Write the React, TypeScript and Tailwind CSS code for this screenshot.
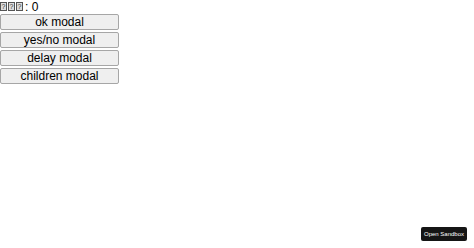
const Tofu = () => (
  <span className="inline-flex h-[9px] w-[7px] items-center justify-center border border-[#555] bg-[#ddd] text-[7px] leading-none text-[#333] mr-[1px]">
    ?
  </span>
);

const buttons = ["ok modal", "yes/no modal", "delay modal", "children modal"];

export default function App() {
  return (
    <div className="min-h-screen bg-white font-['Liberation_Sans',Arial,sans-serif] text-black">
      <div className="flex items-center h-[12px] text-[12px] leading-none pt-[1px]">
        <Tofu />
        <Tofu />
        <Tofu />
        <span className="ml-[1px]">: 0</span>
      </div>
      <div className="flex flex-col gap-[2px] pt-[2px] w-[119px]">
        {buttons.map((b) => (
          <button
            key={b}
            className="h-[16px] w-full rounded-[2px] border border-[#a6a6a6] bg-[#efefef] text-[12px] leading-none text-black"
          >
            {b}
          </button>
        ))}
      </div>
      <button className="fixed right-[7px] bottom-[7px] h-[14px] w-[46px] rounded-[2px] bg-[#151515] text-[6px] text-white">
        Open Sandbox
      </button>
    </div>
  );
}
